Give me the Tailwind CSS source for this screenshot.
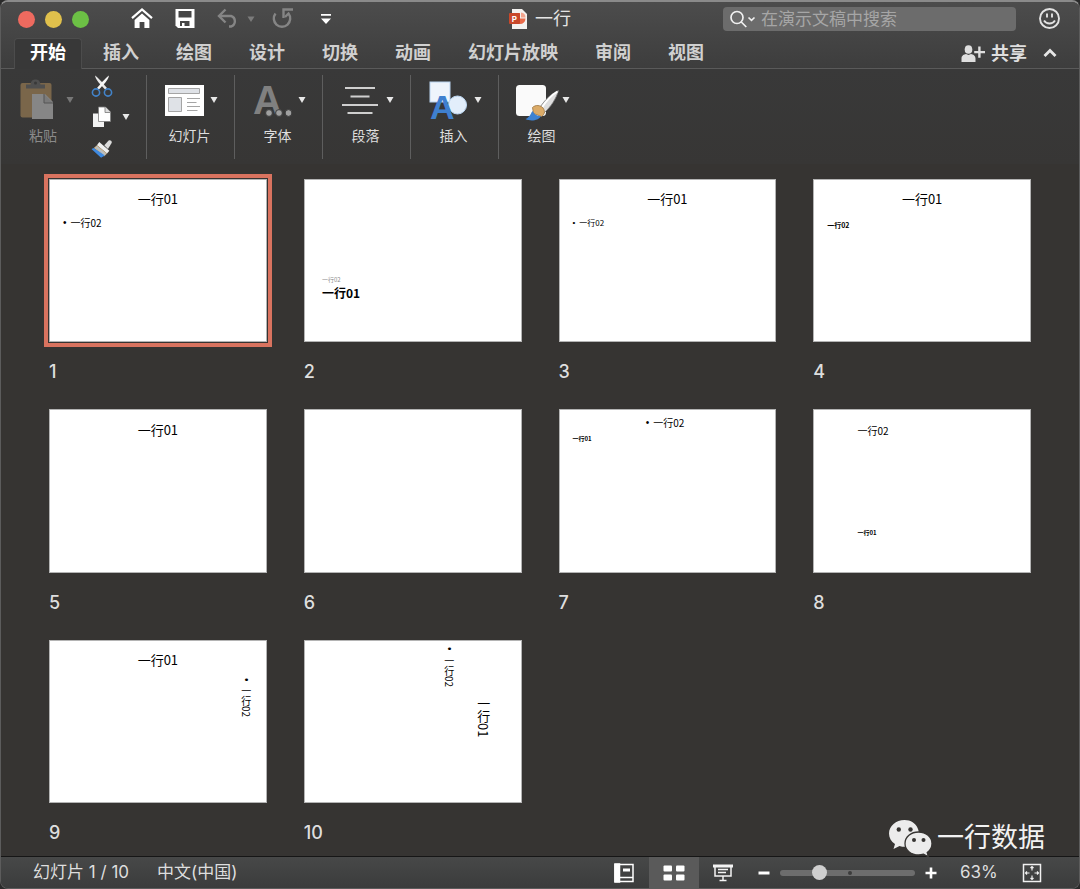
<!DOCTYPE html>
<html lang="zh-CN">
<head>
  <meta charset="UTF-8" />
  <meta name="viewport" content="width=device-width, initial-scale=1.0"/>
  <title>一行</title>
  <script src="https://cdn.jsdelivr.net/npm/@tailwindcss/browser@4"></script>
</head>
<body class="bg-[#2a2a2a] font-['Inter','Noto_Sans_CJK_SC',sans-serif] text-[#dedede]">

  <div class="flex flex-col min-h-screen rounded-lg overflow-hidden border border-[#5c5c5c] border-t-2 border-t-[#8a8a8a] bg-[#363432]">

    <header class="bg-linear-to-b from-[#4c4c4c] to-[#3d3d3d]">
      <!-- Barra de título -->
      <div class="grid grid-cols-[1fr_auto_1fr] items-center h-[34px]">
        <div class="flex items-center pl-[17px]">
          <div class="flex gap-[10px]">
            <button aria-label="关闭" class="size-[17px] rounded-full bg-[#ee6a5f]"></button>
            <button aria-label="最小化" class="size-[17px] rounded-full bg-[#e0c04c]"></button>
            <button aria-label="缩放" class="size-[17px] rounded-full bg-[#6cc045]"></button>
          </div>
          <div class="flex items-center gap-[21px] ml-[42px]">
            <button aria-label="主页">
              <svg class="block w-[22px] h-[22px]" viewBox="0 0 22 22" fill="none">
                <path d="M1 10.200 11 1.500l10 8.700" stroke="#fff" stroke-width="2.200"/>
                <path d="M11 5.500 3.600 12v8h5v-6h4.800v6h5v-8z" fill="#fff"/>
              </svg>
            </button>
            <button aria-label="保存">
              <svg class="block w-[22px] h-[22px]" viewBox="0 0 22 22">
                <path d="M1.500 1h19v19H4l-2.500-2.500z" fill="#fff"/>
                <path d="M4.500 3h13v6.500h-13zM6 13h9.500v5H6z" fill="#464646"/>
                <path d="M8 15h2.500v3H8z" fill="#fff"/>
              </svg>
            </button>
            <button aria-label="撤消">
              <svg class="block w-[22px] h-[22px]" viewBox="0 0 22 22" fill="none" stroke="#858585" stroke-width="2.400">
                <path d="M8.500 1.500 2 8l6.500 6.500"/><path d="M2.500 8H14a5.500 5.500 0 0 1 0 10.500h-2"/>
              </svg>
            </button>
          </div>
          <svg class="block w-2 h-2 ml-2" viewBox="0 0 8 8"><path d="M0.500 1.500h7L4 7z" fill="#7b7b7b"/></svg>
          <button aria-label="重复" class="ml-4">
            <svg class="block w-[22px] h-[22px]" viewBox="0 0 22 22" fill="none" stroke="#858585" stroke-width="2.400">
              <path d="M4.500 5.500A8.200 8.200 0 1 0 17.500 5.500L14 9"/><path d="M12.500 10V1.500H22"/>
            </svg>
          </button>
          <button aria-label="自定义快速访问工具栏" class="ml-[27px]">
            <svg class="block w-3 h-3" viewBox="0 0 12 12" fill="#fff"><path d="M1 1h10v1.800H1zM1 5.500h10L6 11z"/></svg>
          </button>
        </div>

        <div class="flex items-center gap-2">
          <svg class="block w-[18px] h-[22px]" viewBox="0 0 18 22">
            <path d="M3 1h10l5 5v15H3z" fill="#f4f2f0"/>
            <path d="M11 5a5.500 5.500 0 1 0 5.500 5.500H11z" fill="#ea6b4a"/>
            <path d="M12 4.500a5 5 0 0 1 4.500 5H12z" fill="#f4a58e"/>
            <rect y="5" width="11" height="11" rx="1" fill="#c9482a"/>
            <text x="2.800" y="13.500" font-size="8" font-weight="700" fill="#fff">P</text>
          </svg>
          <h1 class="text-[18px] leading-6 text-[#e4e4e4]">一行</h1>
        </div>

        <div class="flex items-center justify-end gap-[22px] pr-[18px]">
          <label class="flex items-center w-[293px] h-6 rounded bg-[#6c6c6c] pl-[6px]">
            <svg class="block w-7 h-[18px]" viewBox="0 0 28 18" fill="none" stroke="#f0f0f0" stroke-width="1.700">
              <circle cx="8" cy="7.500" r="6"/><path d="m12.300 12 5 5" /><path d="m19.500 7.500 3 2.800 3-2.800"/>
            </svg>
            <input type="search" aria-label="搜索" placeholder="在演示文稿中搜索" class="flex-1 min-w-0 ml-1 text-[17px] leading-6 outline-none bg-transparent placeholder:text-[#a6a6a6]"/>
          </label>
          <button aria-label="反馈">
            <svg class="block w-[23px] h-[23px]" viewBox="0 0 23 23" fill="none" stroke="#e2e2e2" stroke-width="1.900">
              <circle cx="11.500" cy="10.500" r="9.500"/><path d="M9 5.500v4M14 5.500v4M6 12.500a6.500 6.500 0 0 0 11 0"/>
            </svg>
          </button>
        </div>
      </div>

      <!-- Pestañas -->
      <div class="flex items-end h-[33px] border-b border-[#5a5a5a]">
        <nav class="flex gap-[5px] pl-[13px] text-[18px] leading-7 font-bold text-[#d0d0d0]">
          <button class="px-[15px] -mb-px pb-[2px] rounded-t-sm border border-b-0 border-[#4c4c4c] bg-[#383838] text-white">开始</button>
          <button class="px-4">插入</button>
          <button class="px-4">绘图</button>
          <button class="px-4">设计</button>
          <button class="px-4">切换</button>
          <button class="px-4">动画</button>
          <button class="px-4">幻灯片放映</button>
          <button class="px-4">审阅</button>
          <button class="px-4">视图</button>
        </nav>
        <div class="flex items-center gap-4 ml-auto pr-[22px] text-[18px] leading-7">
          <button class="flex items-center gap-[6px] font-bold">
            <svg class="block w-6 h-[18px]" viewBox="0 0 24 18" fill="#dedede">
              <ellipse cx="7.500" cy="4.500" rx="3.800" ry="4.300"/>
              <path d="M0.500 17v-3.500C0.500 10.500 3 9.500 5 9l2.500 1L10 9c2 .5 4.500 1.500 4.500 4.500V17z"/>
              <path d="M17.200 1.500h2.400v4.400h4.400v2.400h-4.400v4.400h-2.400V8.300h-4V5.900h4z"/>
            </svg>
            共享
          </button>
          <button aria-label="折叠功能区">
            <svg class="block w-[14px] h-3" viewBox="0 0 14 12" fill="none" stroke="#e6e6e6" stroke-width="2.800"><path d="m1.500 8 5.500-5.500L12.500 8"/></svg>
          </button>
        </div>
      </div>
    </header>

    <!-- Cinta de opciones -->
    <section class="flex pt-[6px] pb-[5px] bg-linear-to-b from-[#393939] to-[#373635] text-[14px] leading-5">
      <div class="flex w-[145px] pl-[19px] text-[#8a8a8a]">
        <div class="pt-1">
          <div class="flex items-center gap-3 h-[42px]">
            <button aria-label="粘贴">
              <svg class="block w-[34px] h-[42px]" viewBox="0 0 34 42">
                <rect x="0.500" y="4" width="31" height="34.500" rx="2" fill="#7a664a"/>
                <path d="M6 9.500V5.500h4.500C11 1.500 13 .5 15.500.5s4.500 1 5 5H25v4z" fill="#4f4f4f"/>
                <circle cx="15.500" cy="4" r="1.500" fill="#393939"/>
                <path d="M12 15h13l8 8v17H12z" fill="#868686"/>
                <path d="M24 15v9h9" fill="#7a7a7a" stroke="#555"/>
              </svg>
            </button>
            <svg class="block w-2 h-2" viewBox="0 0 8 8"><path d="M0.500 1h7L4 7z" fill="#777"/></svg>
          </div>
          <p class="mt-[5px] pl-[9px]">粘贴</p>
        </div>
        <div class="flex flex-col gap-[9px] ml-[17px]">
          <button aria-label="剪切">
            <svg class="block w-[22px] h-[22px]" viewBox="0 0 22 22" fill="none">
              <path d="M4 0.500c.5 3 2 5.500 10 14l2-1.500C10.500 6.500 6.500 2 4 .5z" fill="#e9e9e9"/>
              <path d="M18 0.500c-.5 3-2 5.500-10 14L6 13C11.500 6.500 15.500 2 18 .5z" fill="#f7f7f7"/>
              <circle cx="5" cy="17.500" r="3.600" stroke="#4283c9" stroke-width="1.600"/>
              <circle cx="17" cy="17.500" r="3.600" stroke="#4283c9" stroke-width="1.600"/>
            </svg>
          </button>
          <button aria-label="复制" class="flex items-center gap-[9px]">
            <svg class="block w-[22px] h-[22px]" viewBox="0 0 22 22">
              <path d="M2 7.500h11V21H2z" fill="#f2f2f2"/>
              <path d="M7.500 1h7L19.500 6v9.500h-12z" fill="#fff" stroke="#7c7c7c" stroke-width=".8"/>
              <path d="M14 1v5.500h5.500" fill="#ddd" stroke="#777" stroke-width=".8"/>
            </svg>
            <svg class="block w-2 h-2" viewBox="0 0 8 8"><path d="M0.500 1h7L4 7z" fill="#e8e8e8"/></svg>
          </button>
          <button aria-label="格式刷">
            <svg class="block w-[22px] h-[22px]" viewBox="0 0 24 22">
              <path d="m14.500 8 4.500-5c1.500-1.500 4.500.5 3.500 2.500L18.500 12z" fill="#dcdcdc"/>
              <path d="m9 4.500 11 9.500-2.500 3L6.500 8z" fill="#efefef"/>
              <path d="m6.500 8 11 9-3 3L3 11z" fill="#c9b79a"/>
              <path d="M3 11 0.500 12 11 21.500c2-.5 3-1.500 4-2.500z" fill="#3f8ae0"/>
              <path d="m6 10 9 8" stroke="#aebfd2" stroke-width="1.500"/>
            </svg>
          </button>
        </div>
      </div>

      <div class="w-[88px] pt-1 border-l border-[#5e5e5e]">
        <button class="block w-full">
          <span class="flex items-center gap-[6px] h-[42px] pl-[17px]">
            <svg class="block w-10 h-[42px]" viewBox="0 0 40 42">
              <path d="M1 6h39v31H1z" fill="#fff"/>
              <path d="M4.500 9.500h31v5h-31zM4.500 18.500h13v14h-13z" fill="#dfe2e7" stroke="#a5a5a5"/>
              <path d="M23 19.500h13M23 23.500h9.500M23 27.500h13M23 31.500h10.500" stroke="#a5a5a5"/>
            </svg>
            <svg class="block w-2 h-2" viewBox="0 0 8 8"><path d="M0.500 1h7L4 7z" fill="#e8e8e8"/></svg>
          </span>
          <span class="block mt-[5px] pr-[2px]">幻灯片</span>
        </button>
      </div>

      <div class="w-[88px] pt-1 border-l border-[#5e5e5e]">
        <button class="block w-full">
          <span class="flex items-center gap-[6px] h-[42px] pl-[17px]">
            <svg class="block w-10 h-[42px]" viewBox="0 0 40 42" fill="#808080">
              <text x="1" y="35" font-family="Liberation Sans" font-size="40" font-weight="700">A</text>
              <g stroke="#393939" stroke-width="1">
                <circle cx="17" cy="34" r="3.400" fill="#a0a0a0"/><circle cx="27" cy="34" r="3.400" fill="#a0a0a0"/><circle cx="36.500" cy="34" r="3.400" fill="#a0a0a0"/>
              </g>
            </svg>
            <svg class="block w-2 h-2" viewBox="0 0 8 8"><path d="M0.500 1h7L4 7z" fill="#e8e8e8"/></svg>
          </span>
          <span class="block mt-[5px] pr-[2px]">字体</span>
        </button>
      </div>

      <div class="w-[88px] pt-1 border-l border-[#5e5e5e]">
        <button class="block w-full">
          <span class="flex items-center gap-[6px] h-[42px] pl-[17px]">
            <svg class="block w-10 h-[42px]" viewBox="0 0 40 42" stroke="#cfcfcf" stroke-width="2.200">
              <path d="M5 9h30M10.500 17.500h19M2 26h36M7.500 34h25"/>
            </svg>
            <svg class="block w-2 h-2" viewBox="0 0 8 8"><path d="M0.500 1h7L4 7z" fill="#e8e8e8"/></svg>
          </span>
          <span class="block mt-[5px] pr-[2px]">段落</span>
        </button>
      </div>

      <div class="w-[88px] pt-1 border-l border-[#5e5e5e]">
        <button class="block w-full">
          <span class="flex items-center gap-[6px] h-[42px] pl-[17px]">
            <svg class="block w-10 h-[42px] overflow-visible" viewBox="0 0 40 42">
              <rect x="2" y="3" width="20" height="20" fill="#eef4fc" stroke="#b9d3f0"/>
              <circle cx="29.500" cy="26" r="9" fill="#e2eefb" stroke="#bcd7f3"/>
              <text x="2" y="40" font-family="Liberation Sans" font-size="34" font-weight="700" fill="#3f80d0">A</text>
            </svg>
            <svg class="block w-2 h-2" viewBox="0 0 8 8"><path d="M0.500 1h7L4 7z" fill="#e8e8e8"/></svg>
          </span>
          <span class="block mt-[5px] pr-[2px]">插入</span>
        </button>
      </div>

      <div class="w-[88px] pt-1 border-l border-[#5e5e5e]">
        <button class="block w-full">
          <span class="flex items-center gap-[6px] h-[42px] pl-[17px]">
            <svg class="block w-10 h-[42px] overflow-visible" viewBox="0 0 40 42">
              <rect y="6" width="30" height="31" rx="3.500" fill="#fafafa"/>
              <path d="M42.500 11.500c-7 3-13.500 9-19 17.500l5 4.500C35 27.500 40 20 42.500 11.500z" fill="#dedede" stroke="#777" stroke-width=".8"/>
              <path d="M41.500 12.500c-6 3.500-11 9-16 16.500" stroke="#fff" stroke-width="2" fill="none"/>
              <path d="M16.500 28.500c3-3 8-2.500 10.500.5 2.500 3.500 1.500 6.500-1.500 8.500l-8-3z" fill="#dbab68" stroke="#9c7440" stroke-width=".8"/>
              <path d="M16.500 32c-1.500 1.500-2 6-7 8 4.500 2.500 13 2 15.500-3-3 .5-7-1.500-8.500-5z" fill="#3d82d2"/>
            </svg>
            <svg class="block w-2 h-2" viewBox="0 0 8 8"><path d="M0.500 1h7L4 7z" fill="#e8e8e8"/></svg>
          </span>
          <span class="block mt-[5px] pr-[2px]">绘图</span>
        </button>
      </div>
    </section>

    <!-- Clasificador de diapositivas -->
    <main class="relative flex-1 px-12 pt-[15px] pb-2">
      <div class="grid grid-cols-4 gap-x-[37px] gap-y-[25px] font-['Noto_Sans_CJK_SC',sans-serif] text-black">
        <figure>
          <div class="relative aspect-4/3 bg-white border border-[#b4b4b4] outline-4 outline-offset-1 outline-[#d9735f]">
            <p class="absolute inset-x-0 top-[7%] text-center text-[13px] leading-4">一行01</p>
            <p class="absolute left-[6%] top-[22%] flex gap-1 text-[10px] leading-4"><span class="font-['Liberation_Sans']">•</span>一行02</p>
          </div>
          <figcaption class="mt-[18px] font-['Inter'] text-[18px] leading-6 font-medium text-[#dedede]">1</figcaption>
        </figure>
        <figure>
          <div class="relative aspect-4/3 bg-white border border-[#b4b4b4]">
            <p class="absolute left-[8%] top-[57%] text-[6px] leading-4 text-[#8a8a8a]">一行02</p>
            <p class="absolute left-[8%] top-[65%] text-[12px] leading-4 font-bold">一行01</p>
          </div>
          <figcaption class="mt-[18px] font-['Inter'] text-[18px] leading-6 font-medium text-[#dedede]">2</figcaption>
        </figure>
        <figure>
          <div class="relative aspect-4/3 bg-white border border-[#b4b4b4]">
            <p class="absolute inset-x-0 top-[7%] text-center text-[13px] leading-4">一行01</p>
            <p class="absolute left-[6%] top-[22%] flex gap-1 text-[8px] leading-4"><span class="font-['Liberation_Sans']">•</span>一行02</p>
          </div>
          <figcaption class="mt-[18px] font-['Inter'] text-[18px] leading-6 font-medium text-[#dedede]">3</figcaption>
        </figure>
        <figure>
          <div class="relative aspect-4/3 bg-white border border-[#b4b4b4]">
            <p class="absolute inset-x-0 top-[7%] text-center text-[13px] leading-4">一行01</p>
            <p class="absolute left-[6%] top-[23%] text-[7px] leading-4 font-bold">一行02</p>
          </div>
          <figcaption class="mt-[18px] font-['Inter'] text-[18px] leading-6 font-medium text-[#dedede]">4</figcaption>
        </figure>
        <figure>
          <div class="relative aspect-4/3 bg-white border border-[#b4b4b4]">
            <p class="absolute inset-x-0 top-[7%] text-center text-[13px] leading-4">一行01</p>
          </div>
          <figcaption class="mt-[18px] font-['Inter'] text-[18px] leading-6 font-medium text-[#dedede]">5</figcaption>
        </figure>
        <figure>
          <div class="relative aspect-4/3 bg-white border border-[#b4b4b4]"></div>
          <figcaption class="mt-[18px] font-['Inter'] text-[18px] leading-6 font-medium text-[#dedede]">6</figcaption>
        </figure>
        <figure>
          <div class="relative aspect-4/3 bg-white border border-[#b4b4b4]">
            <p class="absolute left-[40%] top-[3%] flex gap-1 text-[10px] leading-4"><span class="font-['Liberation_Sans']">•</span>一行02</p>
            <p class="absolute left-[6%] top-[13%] text-[6px] leading-4 font-bold">一行01</p>
          </div>
          <figcaption class="mt-[18px] font-['Inter'] text-[18px] leading-6 font-medium text-[#dedede]">7</figcaption>
        </figure>
        <figure>
          <div class="relative aspect-4/3 bg-white border border-[#b4b4b4]">
            <p class="absolute left-[20%] top-[8%] text-[10px] leading-4">一行02</p>
            <p class="absolute left-[20%] top-[71%] text-[6px] leading-4 font-bold">一行01</p>
          </div>
          <figcaption class="mt-[18px] font-['Inter'] text-[18px] leading-6 font-medium text-[#dedede]">8</figcaption>
        </figure>
        <figure>
          <div class="relative aspect-4/3 bg-white border border-[#b4b4b4]">
            <p class="absolute inset-x-0 top-[7%] text-center text-[13px] leading-4">一行01</p>
            <p class="absolute left-[87%] top-[23%] flex gap-[5px] [writing-mode:vertical-rl] text-[10px] leading-4"><span class="font-['Liberation_Sans']">•</span>一行02</p>
          </div>
          <figcaption class="mt-[18px] font-['Inter'] text-[18px] leading-6 font-medium text-[#dedede]">9</figcaption>
        </figure>
        <figure>
          <div class="relative aspect-4/3 bg-white border border-[#b4b4b4]">
            <p class="absolute left-[63%] top-[4%] flex gap-[5px] [writing-mode:vertical-rl] text-[10px] leading-4"><span class="font-['Liberation_Sans']">•</span>一行02</p>
            <p class="absolute left-[79%] top-[35%] [writing-mode:vertical-rl] text-[13px] leading-4">一行01</p>
          </div>
          <figcaption class="mt-[18px] font-['Inter'] text-[18px] leading-6 font-medium text-[#dedede]">10</figcaption>
        </figure>
      </div>

      <!-- Marca de agua -->
      <div class="absolute right-[34px] -bottom-[2px] flex items-center gap-1 text-[27px] leading-10 text-[#f2f2f2]">
        <svg class="block w-11 h-[37px]" viewBox="0 0 44 37">
          <path d="M15.500 0C7 0 0 6 0 13.500c0 4.200 2.200 8 6 10.500l-1.500 5 6-3c6 2 13 .5 17-4 6-8 1-22-12-22z" fill="#ececec"/>
          <path d="M29.500 12c-7.500 0-13.500 5-13.500 11.500S22 35 29.500 35c1.800 0 3.500-.3 5-.8l5 2.600-1.300-4.300c3-2 4.800-5.300 4.800-9C43 17 37 12 29.500 12z" fill="#ececec" stroke="#363432" stroke-width="1.300"/>
          <g fill="#363432"><circle cx="9.800" cy="9.500" r="2.200"/><circle cx="21.500" cy="9.500" r="2.200"/><circle cx="25" cy="20" r="2"/><circle cx="34.500" cy="20" r="2"/></g>
        </svg>
        一行数据
      </div>
    </main>

    <!-- Barra de estado -->
    <footer class="flex items-center h-8 border-t border-[#161616] bg-linear-to-b from-[#474848] to-[#3b3c3c] text-[17px]">
      <button class="ml-8">幻灯片 1 / 10</button>
      <button class="ml-7">中文(中国)</button>
      <div class="flex items-center h-full ml-auto pr-[37px]">
        <button aria-label="普通视图" class="mr-[15px]">
          <svg class="block w-5 h-5" viewBox="0 0 20 20" fill="none" stroke="#fff" stroke-width="1.500">
            <path d="M1 1.500h18v17H1z"/><path d="M1 1h4.500v18H1z" fill="#fff"/><path d="M5 14.500h14"/><path d="M9 7h7" stroke-width="3"/>
          </svg>
        </button>
        <button aria-label="幻灯片浏览" class="flex items-center justify-center w-[50px] h-full bg-[#5a5a5a]">
          <svg class="block w-[22px] h-4" viewBox="0 0 22 16" fill="#fff">
            <rect x="0.500" y="0.500" width="8.500" height="6" rx="1"/><rect x="13" y="0.500" width="8.500" height="6" rx="1"/>
            <rect x="0.500" y="9.500" width="8.500" height="6" rx="1"/><rect x="13" y="9.500" width="8.500" height="6" rx="1"/>
          </svg>
        </button>
        <button aria-label="幻灯片放映" class="ml-[13px]">
          <svg class="block w-[22px] h-5" viewBox="0 0 22 20" fill="none" stroke="#f4f4f4" stroke-width="1.500">
            <path d="M1 3h20" stroke-width="3"/><path d="M3 3v10h16V3M6 6.500h10M6 9.500h8M11 13v4M7.500 17.500h7"/>
          </svg>
        </button>
        <button aria-label="缩小" class="ml-6">
          <svg class="block w-3 h-3" viewBox="0 0 12 12"><path d="M0.500 6h11" stroke="#fff" stroke-width="3"/></svg>
        </button>
        <div class="relative flex items-center ml-[10px]">
          <input type="range" aria-label="显示比例" min="0" max="100" value="27" class="block w-[135px] h-[6px] appearance-none rounded-full bg-[#6d6d6d] [&::-webkit-slider-thumb]:appearance-none [&::-webkit-slider-thumb]:size-[15px] [&::-webkit-slider-thumb]:rounded-full [&::-webkit-slider-thumb]:bg-[#cfcfcf]"/>
          <span class="absolute left-1/2 size-1 rounded-full bg-[#3c3c3c] pointer-events-none"></span>
        </div>
        <button aria-label="放大" class="ml-[10px]">
          <svg class="block w-3 h-3" viewBox="0 0 12 12"><path d="M0.500 6h11M6 0.500v11" stroke="#fff" stroke-width="2.600"/></svg>
        </button>
        <button class="w-[60px] pl-[23px] text-left">63%</button>
        <button aria-label="适应窗口" class="ml-[25px]">
          <svg class="block w-5 h-5" viewBox="0 0 20 20" fill="none" stroke="#f0f0f0" stroke-width="1.500">
            <rect x="1.500" y="1.500" width="17" height="17"/>
            <path d="M10 3.500v4M10 12.500v4M3.500 10h4M12.500 10h4M8.500 5 10 3.500 11.500 5M8.500 15l1.500 1.500 1.500-1.500M5 8.500 3.500 10 5 11.500M15 8.500l1.500 1.500-1.500 1.500" stroke-width="1.200"/>
          </svg>
        </button>
      </div>
    </footer>
  </div>

</body>
</html>
